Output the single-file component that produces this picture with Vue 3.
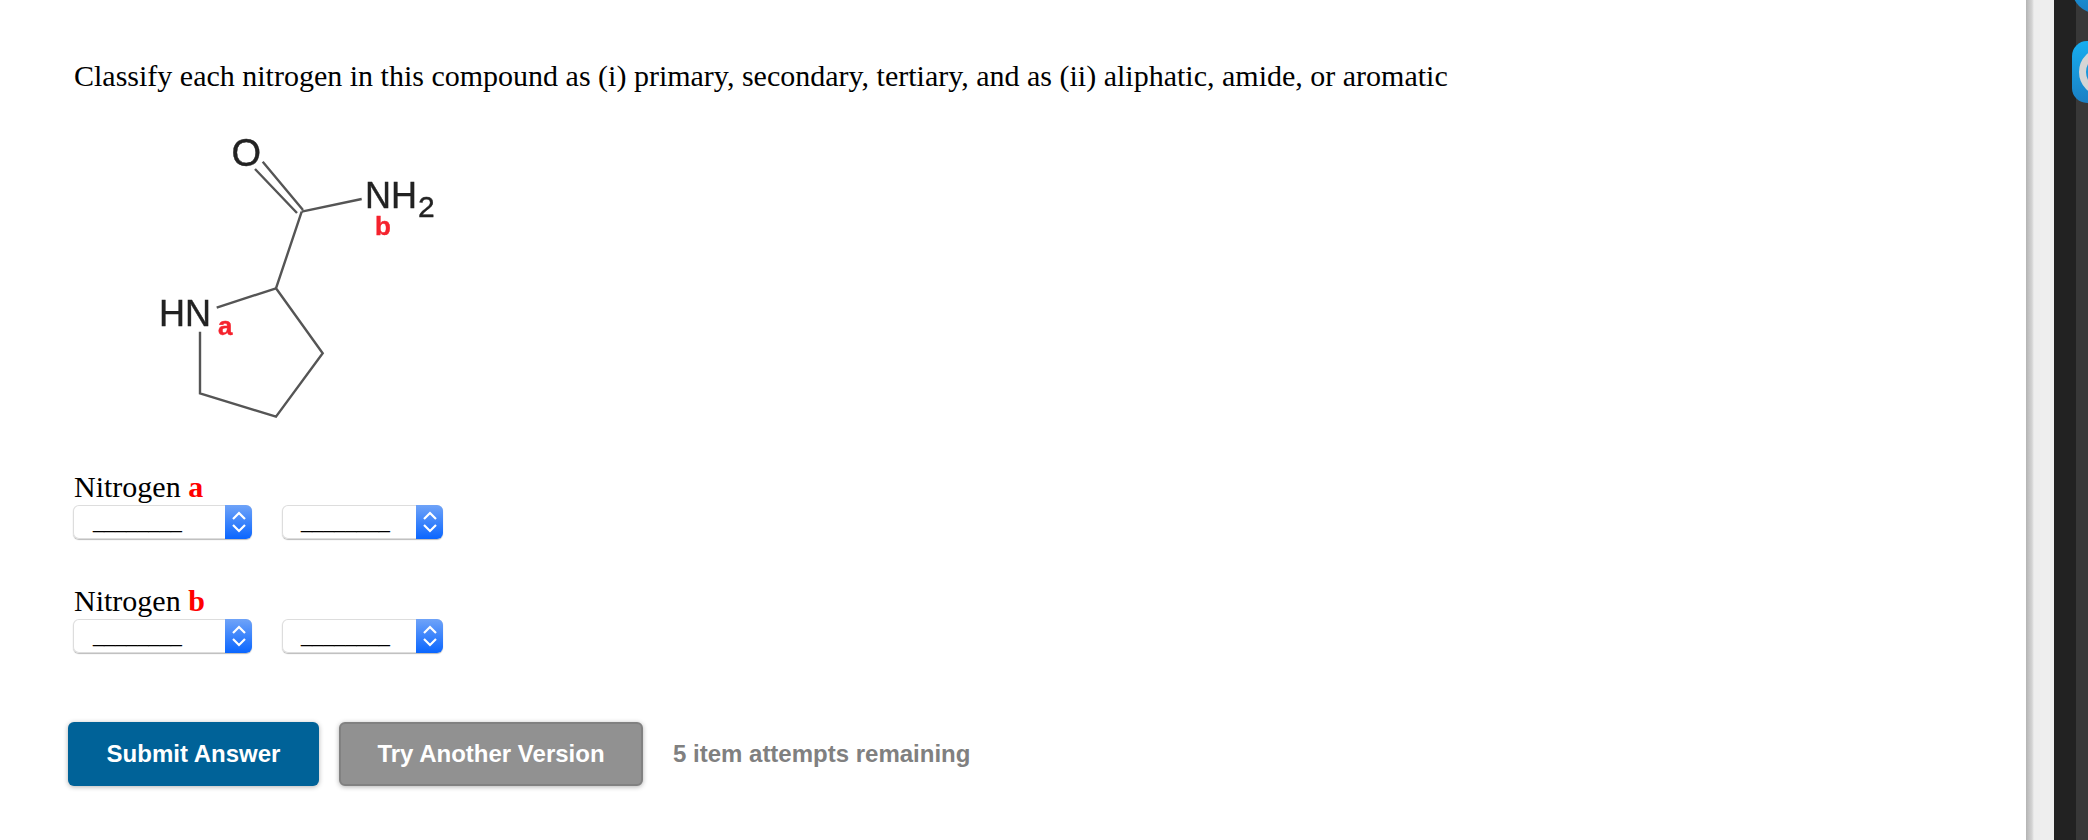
<script setup>
const rows = [
  { label: 'a', widths: ['wide', 'narrow'] },
  { label: 'b', widths: ['wide', 'narrow'] },
]
</script>

<template>
  <div class="page">
    <main class="main">
      <p class="title">Classify each nitrogen in this compound as (i) primary, secondary, tertiary, and as (ii) aliphatic, amide, or aromatic</p>
      <svg class="molecule" viewBox="130 120 340 320" width="340" height="320">
        <g fill="none" stroke="#555" stroke-width="2.4">
          <path d="M255 169 L297 213 M262.7 161.7 L303 210" />
          <path d="M301.7 211.7 L361.7 199" />
          <path d="M301.7 211.7 L276 288.3 L322.7 353.3 L276 416.7 L200 393.3 L200 331.7" />
          <path d="M276 288.3 L216.7 307.7" />
        </g>
        <g class="atoms">
          <text x="231.5" y="166" class="oxygen">O</text>
          <text x="365" y="208">NH</text>
          <text x="418" y="217" class="sub">2</text>
          <text x="159" y="326">HN</text>
        </g>
        <text x="375" y="235" class="mark">b</text>
        <text x="218" y="334.5" class="mark">a</text>
      </svg>
      <section v-for="row in rows" :key="row.label" class="group">
        <div class="label">Nitrogen <b class="letter">{{ row.label }}</b></div>
        <div class="selects">
          <div v-for="w in row.widths" :key="w" class="select" :class="w">
            <span class="value">________</span>
            <span class="stepper">
              <svg viewBox="0 0 16 24" width="16" height="24" fill="none" stroke="#fff" stroke-width="2.2">
                <path d="M2 9 L8 3 L14 9 M2 15 L8 21 L14 15" />
              </svg>
            </span>
          </div>
        </div>
      </section>
      <div class="actions">
        <button class="btn primary">Submit Answer</button>
        <button class="btn secondary">Try Another Version</button>
        <span class="attempts">5 item attempts remaining</span>
      </div>
    </main>
    <aside class="rail">
      <div class="track"></div>
      <div class="dock">
        <div class="dock-left"></div>
        <div class="dock-right"></div>
        <div class="app top"></div>
        <div class="app second"><div class="ring"></div></div>
      </div>
    </aside>
  </div>
</template>

<style scoped>
.page {
  display: flex;
  width: 2088px;
  height: 840px;
  overflow: hidden;
  background: #fff;
}
.main {
  flex: 1;
  padding: 58px 0 0 74px;
  font-family: "Liberation Serif", serif;
  color: #000;
}
.title {
  margin: 0;
  font-size: 30px;
  line-height: 36px;
}
.molecule {
  display: block;
  margin: 26px 0 0 56px;
  filter: blur(0.7px);
}
.atoms text {
  font-family: "Liberation Sans", sans-serif;
  font-size: 36px;
  fill: #222;
  stroke: #222;
  stroke-width: 0.4px;
}
.atoms .sub {
  font-size: 30px;
}
.atoms .oxygen {
  font-size: 38px;
}
.mark {
  font-family: "Liberation Sans", sans-serif;
  font-size: 26px;
  font-weight: 700;
  fill: #f5222d;
  stroke: #f5222d;
  stroke-width: 0.4px;
}
.group + .group {
  margin-top: 44px;
}
.molecule + .group {
  margin-top: 29px;
}
.label {
  font-size: 30px;
  line-height: 35px;
}
.letter {
  color: #f00;
}
.selects {
  display: flex;
  gap: 30px;
  margin: 1px 0 0 -1px;
}
.select {
  display: flex;
  justify-content: space-between;
  height: 34px;
  box-sizing: border-box;
  background: #fff;
  border-radius: 6px;
  box-shadow: inset 0 0 0 1px #ddd, 0 1px 1px #bbb;
  overflow: hidden;
}
.select.wide {
  width: 179px;
  padding-left: 20px;
}
.select.narrow {
  width: 161px;
  padding-left: 19px;
}
.value {
  font-family: "Liberation Sans", sans-serif;
  font-size: 20px;
  line-height: 32px;
}
.stepper {
  display: flex;
  align-items: center;
  justify-content: center;
  width: 27px;
  background: linear-gradient(#6fa3f8, #0a66ff);
}
.actions {
  display: flex;
  align-items: center;
  margin: 69px 0 0 -6px;
  font-family: "Liberation Sans", sans-serif;
  font-weight: 700;
  font-size: 24px;
}
.btn {
  height: 64px;
  box-sizing: border-box;
  border-radius: 6px;
  font: inherit;
  color: #fff;
  box-shadow: 0 1px 5px rgba(0, 0, 0, 0.3);
}
.primary {
  width: 251px;
  background: #006298;
  border: 0;
}
.secondary {
  width: 304px;
  margin-left: 20px;
  background: #919191;
  border: 2px solid #818181;
}
.attempts {
  margin-left: 30px;
  color: #808080;
}
.rail {
  display: flex;
  width: 62px;
  flex: none;
}
.track {
  width: 28px;
  background: linear-gradient(90deg, #b4b4b4, #d4d4d4 6px, #eee 8px);
}
.dock {
  display: flex;
  flex: 1;
  position: relative;
  overflow: hidden;
}
.dock-left {
  width: 22px;
  background: #222;
}
.dock-right {
  flex: 1;
  background: #383838;
}
.app {
  position: absolute;
  background: linear-gradient(#17aef0, #1a7fc4);
}
.app.top {
  left: 18px;
  top: -50px;
  width: 62px;
  height: 63px;
  border-radius: 14px 14px 24px 24px;
}
.app.second {
  left: 18px;
  top: 41px;
  width: 62px;
  height: 62px;
  border-radius: 15px;
}
.ring {
  position: absolute;
  left: 7px;
  top: 7px;
  width: 48px;
  height: 48px;
  box-sizing: border-box;
  border: 7px solid #d5d5d5;
  border-radius: 50%;
}
</style>
